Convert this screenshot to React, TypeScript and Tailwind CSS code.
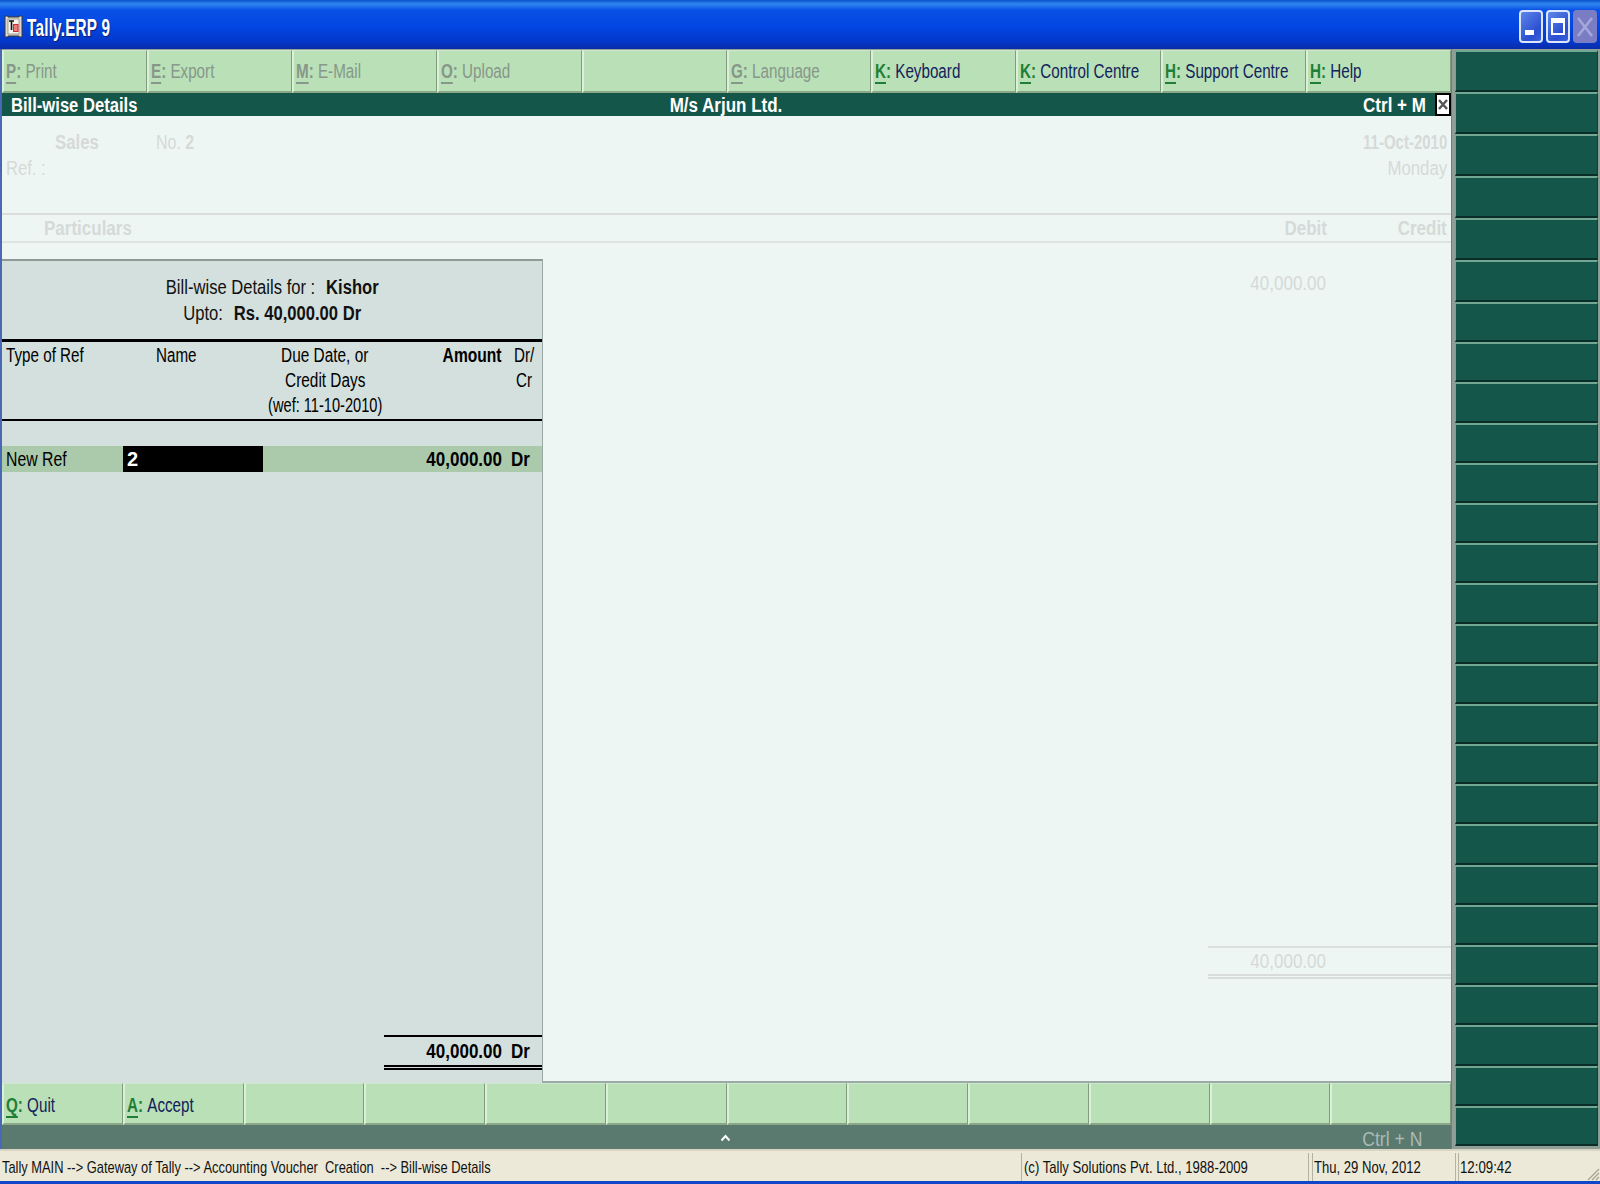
import type { ReactNode } from "react"

const font = "font-['Liberation_Sans',sans-serif]"

const topButtons = [
  { k: "P", label: "Print", on: false },
  { k: "E", label: "Export", on: false },
  { k: "M", label: "E-Mail", on: false },
  { k: "O", label: "Upload", on: false },
  { k: "", label: "", on: false },
  { k: "G", label: "Language", on: false },
  { k: "K", label: "Keyboard", on: true },
  { k: "K", label: "Control Centre", on: true },
  { k: "H", label: "Support Centre", on: true },
  { k: "H", label: "Help", on: true },
]

const bottomButtons = [
  { k: "Q", label: "Quit", on: true },
  { k: "A", label: "Accept", on: true },
  ...Array.from({ length: 10 }, () => ({ k: "", label: "", on: true })),
]

// the original uses a narrow screen font, none is installed so the text gets squeezed
function Narrow({ className, children }: { className: string; children: ReactNode }) {
  return <span className={`inline-block whitespace-pre ${className}`}>{children}</span>
}

function BarButton({ k, label, on, low }: { k: string; label: string; on: boolean; low?: boolean }) {
  return (
    <div
      className={
        (low ? "pt-[2px] " : "") +
        "flex-1 basis-0 min-w-0 flex items-center pl-[2px] bg-[#b9e0b6] border-l-2 border-l-[#dcefd9] border-r border-r-[#7f9c7c] border-t border-t-[#cfe8cc] border-b-2 border-b-[#8aa886] text-[20px]"
      }
    >
      {k && (
        <Narrow className="origin-left scale-x-[0.76]">
          <span className={on ? "font-bold text-[#1f7f36] underline underline-offset-4" : "font-bold text-[#87978a] underline underline-offset-4"}>{k}</span>
          <span className={on ? "font-bold text-[#1f7f36]" : "font-bold text-[#87978a]"}>: </span>
          <span className={on ? "text-[#12225c]" : "text-[#87978a]"}>{label}</span>
        </Narrow>
      )}
    </div>
  )
}

function TallyIcon() {
  return (
    <svg width="19" height="24" viewBox="0 0 19 24">
      <path d="M1 1h3v1h11V1h3v21h-3v-1H4v1H1z" fill="#dcd8cc" stroke="#3f3830" strokeWidth="1" />
      <rect x="4" y="4" width="11" height="15" fill="#f6f3ea" stroke="#555" strokeWidth="0.5" />
      <path d="M5 6h5M7.5 6v9" stroke="#111" strokeWidth="1.6" fill="none" />
      <rect x="9" y="9" width="5.5" height="8" fill="#d8262c" />
      <path d="M10 11h3.5M10 13h3.5M10 15h3.5" stroke="#fff" strokeWidth="0.8" />
    </svg>
  )
}

function WindowButton({ kind }: { kind: "min" | "max" | "close" }) {
  if (kind === "close") {
    return (
      <div className="w-[24px] h-[33px] rounded-[4px] bg-[#7a7cc4] flex items-center justify-center">
        <svg width="18" height="22" viewBox="0 0 18 22">
          <path d="M2 2l14 18M16 2L2 20" stroke="#a6a8da" strokeWidth="2.5" />
        </svg>
      </div>
    )
  }
  return (
    <div className="w-[24px] h-[33px] rounded-[4px] border-2 border-[#dbe6fb] bg-[linear-gradient(135deg,#5f86ea,#2a4fd0_70%,#3a62dc)] flex items-center justify-center">
      {kind === "min" ? (
        <div className="w-[9px] h-[5px] bg-white mt-[12px] mr-[4px]" />
      ) : (
        <div className="w-[14px] h-[17px] border-2 border-t-[5px] border-white" />
      )}
    </div>
  )
}

function SideKey({ tall }: { tall: boolean }) {
  return (
    <div
      className={
        (tall ? "h-[42px] shrink-0 " : "flex-1 ") +
        "bg-[#15564a] border-t-2 border-t-[#72a893] border-l border-l-[#72a893] border-b-2 border-b-[#0a2e27] border-r border-r-[#0f3f36]"
      }
    />
  )
}

export default function App() {
  return (
    <div className={`w-[1600px] h-[1184px] flex flex-col overflow-hidden ${font}`}>
      {/* title bar */}
      <div className="h-[49px] shrink-0 flex items-center pl-[4px] pr-[3px] bg-[linear-gradient(180deg,#0a53c8_0px,#2f86f0_4px,#0a52e6_10px,#0346e4_26px,#0437c8_42px,#0a2da8_49px)]">
        <div className="mt-[5px]">
          <TallyIcon />
        </div>
        <Narrow className="ml-[4px] mt-[6px] text-[24px] font-bold text-white tracking-[0.3px] [text-shadow:1px_1px_1px_#0a1f70] origin-left scale-x-[0.64]">Tally.ERP 9</Narrow>
        <div className="ml-auto flex items-center gap-[3px] mt-[4px]">
          <WindowButton kind="min" />
          <WindowButton kind="max" />
          <WindowButton kind="close" />
        </div>
      </div>

      <div className="flex-1 min-h-0 flex bg-[#8f9f98]">
        {/* main column */}
        <div className="w-[1451px] shrink-0 flex flex-col border-l-2 border-l-[#4a69b4] pt-px">
          <div className="h-[43px] shrink-0 flex">
            {topButtons.map((b, i) => (
              <BarButton key={i} {...b} />
            ))}
          </div>

          <div className="h-[23px] shrink-0 flex items-center bg-[#15564a] text-white font-bold text-[20px] pl-[9px] relative">
            <Narrow className="origin-left scale-x-[0.83]">Bill-wise Details</Narrow>
            <Narrow className="absolute left-[604px] w-[240px] text-center scale-x-[0.85]">M/s Arjun Ltd.</Narrow>
            <Narrow className="absolute right-[25px] origin-right scale-x-[0.85]">Ctrl + M</Narrow>
            <span className="absolute right-0 top-0 w-[16px] h-[23px] bg-white border-2 border-black flex items-center justify-center">
              <svg width="10" height="11" viewBox="0 0 10 11">
                <path d="M1 1l8 9M9 1l-8 9" stroke="#555" strokeWidth="2.4" />
              </svg>
            </span>
          </div>

          <div className="flex-1 min-h-0 flex flex-col bg-[#eef6f4] text-[#d5dad8] text-[20px] leading-[26px] border-b-2 border-b-[#9aaaa4]">
            {/* voucher heading */}
            <div className="h-[99px] shrink-0 flex justify-between pt-[13px] pr-[4px] border-b-2 border-b-[#dbdedc]">
              <div>
                <div className="flex">
                  <div className="pl-[53px] w-[154px]">
                    <Narrow className="origin-left font-bold scale-x-[0.84]">Sales</Narrow>
                  </div>
                  <Narrow className="origin-left scale-x-[0.8]">No. <span className="font-bold">2</span></Narrow>
                </div>
                <div className="pl-[4px]">
                  <Narrow className="origin-left scale-x-[0.83]">Ref. :</Narrow>
                </div>
              </div>
              <div className="text-right">
                <div>
                  <Narrow className="origin-right font-bold scale-x-[0.75]">11-Oct-2010</Narrow>
                </div>
                <div>
                  <Narrow className="origin-right scale-x-[0.84]">Monday</Narrow>
                </div>
              </div>
            </div>
            <div className="h-[28px] shrink-0 flex items-center pr-[4px] border-b-2 border-b-[#dfe4e2] font-bold">
              <div className="pl-[42px]">
                <Narrow className="origin-left scale-x-[0.85]">Particulars</Narrow>
              </div>
              <div className="ml-auto text-right">
                <Narrow className="origin-right scale-x-[0.85]">Debit</Narrow>
              </div>
              <div className="w-[120px] text-right">
                <Narrow className="origin-right scale-x-[0.85]">Credit</Narrow>
              </div>
            </div>

            <div className="flex-1 min-h-0 flex pt-[16px]">
              {/* bill-wise panel */}
              <div className="w-[541px] shrink-0 flex flex-col bg-[#d4e0dd] border-t-2 border-t-[#8f9a97] border-r border-r-[#9aa9a5] text-black -mb-[2px]">
                <div className="h-[78px] shrink-0 flex flex-col items-center justify-center text-[#111]">
                  <Narrow className="scale-x-[0.83]">Bill-wise Details for :  <span className="font-bold ml-[2px]">Kishor</span></Narrow>
                  <Narrow className="scale-x-[0.83]">Upto:  <span className="font-bold ml-[2px]">Rs. 40,000.00 Dr</span></Narrow>
                </div>
                <div className="h-[82px] shrink-0 flex border-y-black border-t-[3px] border-b-2 pt-px leading-[25px]">
                  <div className="w-[152px] pl-[4px]">
                    <Narrow className="origin-left scale-x-[0.76]">Type of Ref</Narrow>
                  </div>
                  <div className="w-[104px] pl-[2px]">
                    <Narrow className="origin-left scale-x-[0.76]">Name</Narrow>
                  </div>
                  <div className="w-[134px] flex flex-col items-center">
                    <Narrow className="scale-x-[0.77]">Due Date, or</Narrow>
                    <Narrow className="scale-x-[0.77]">Credit Days</Narrow>
                    <Narrow className="scale-x-[0.73]">(wef: 11-10-2010)</Narrow>
                  </div>
                  <div className="w-[110px] text-right font-bold">
                    <Narrow className="origin-right scale-x-[0.78]">Amount</Narrow>
                  </div>
                  <div className="pl-[12px]">
                    <div>
                      <Narrow className="origin-left scale-x-[0.76]">Dr/</Narrow>
                    </div>
                    <div className="pl-[2px]">
                      <Narrow className="origin-left scale-x-[0.76]">Cr</Narrow>
                    </div>
                  </div>
                </div>
                <div className="h-[26px] mt-[25px] shrink-0 flex items-center bg-[#abcaab]">
                  <div className="w-[121px] pl-[4px]">
                    <Narrow className="origin-left scale-x-[0.79]">New Ref</Narrow>
                  </div>
                  <div className="w-[140px] h-[26px] bg-black text-white font-bold pl-[4px]">2</div>
                  <div className="w-[239px] text-right font-bold">
                    <Narrow className="origin-right scale-x-[0.85]">40,000.00</Narrow>
                  </div>
                  <div className="pl-[9px] font-bold">
                    <Narrow className="origin-left scale-x-[0.85]">Dr</Narrow>
                  </div>
                </div>
                <div className="flex-1" />
                <div className="ml-[382px] h-[35px] mb-[13px] shrink-0 border-t-2 border-t-black border-b-[5px] border-double border-b-black flex items-center font-bold">
                  <div className="flex-1 text-right">
                    <Narrow className="origin-right scale-x-[0.85]">40,000.00</Narrow>
                  </div>
                  <div className="w-[40px] pl-[9px]">
                    <Narrow className="origin-left scale-x-[0.85]">Dr</Narrow>
                  </div>
                </div>
              </div>

              {/* voucher amounts behind the panel */}
              <div className="flex-1 flex flex-col">
                <div className="text-right pr-[125px] mt-[11px]">
                  <Narrow className="origin-right scale-x-[0.85]">40,000.00</Narrow>
                </div>
                <div className="mt-auto mb-[102px] ml-[665px] h-[33px] border-t-2 border-t-[#dbdfdd] border-b-[5px] border-double border-b-[#d8dcda] flex items-center justify-end pr-[125px]">
                  <Narrow className="origin-right scale-x-[0.85]">40,000.00</Narrow>
                </div>
              </div>
            </div>
          </div>

          <div className="h-[42px] shrink-0 flex">
            {bottomButtons.map((b, i) => (
              <BarButton key={i} {...b} low />
            ))}
          </div>
          <div className="h-[24px] shrink-0 bg-[#5a7a70] relative flex items-center justify-end pr-[29px] pt-[3px] text-[#a9bbb4] text-[20px]">
            <svg className="absolute left-[718px] top-[9px]" width="11" height="8" viewBox="0 0 11 8">
              <path d="M1.5 6.5L5.5 2l4 4.5" stroke="#fff" strokeWidth="2" fill="none" />
            </svg>
            <Narrow className="origin-right scale-x-[0.88]">Ctrl + N</Narrow>
          </div>
        </div>

        {/* right key strip */}
        <div className="flex-1 flex flex-col pl-[3px] pr-[2px] pt-px pb-[3px] border-l border-l-[#6f7f79]">
          {Array.from({ length: 27 }, (_, i) => (
            <SideKey key={i} tall={i < 6} />
          ))}
        </div>
      </div>

      {/* status bar */}
      <div className="h-[32px] shrink-0 flex bg-[#ece9d8] text-[17px] text-[#111] border-t-2 border-t-[#d8d5c5] pt-[4px] relative">
        <div className="w-[1021px] pl-[2px]">
          <Narrow className="origin-left scale-x-[0.757]">Tally MAIN --&gt; Gateway of Tally --&gt; Accounting Voucher  Creation  --&gt; Bill-wise Details</Narrow>
        </div>
        <div className="w-[288px] pl-[2px] border-x border-x-[#b5b2a2] -mt-[2px] pt-[2px]">
          <Narrow className="origin-left scale-x-[0.77]">(c) Tally Solutions Pvt. Ltd., 1988-2009</Narrow>
        </div>
        <div className="w-[144px] ml-[3px] pl-px border-x border-x-[#b5b2a2] -mt-[2px] pt-[2px]">
          <Narrow className="origin-left scale-x-[0.77]">Thu, 29 Nov, 2012</Narrow>
        </div>
        <div className="flex-1 ml-[2px] pl-px border-l border-l-[#b5b2a2] -mt-[2px] pt-[2px]">
          <Narrow className="origin-left scale-x-[0.78]">12:09:42</Narrow>
        </div>
        <svg className="absolute right-0 bottom-0" width="14" height="14" viewBox="0 0 14 14">
          <path d="M13 2L2 13M13 6L6 13M13 10L10 13" stroke="#a5a294" strokeWidth="1.2" />
        </svg>
      </div>
      <div className="h-[3px] shrink-0 bg-[#0f47c8]" />
    </div>
  )
}
